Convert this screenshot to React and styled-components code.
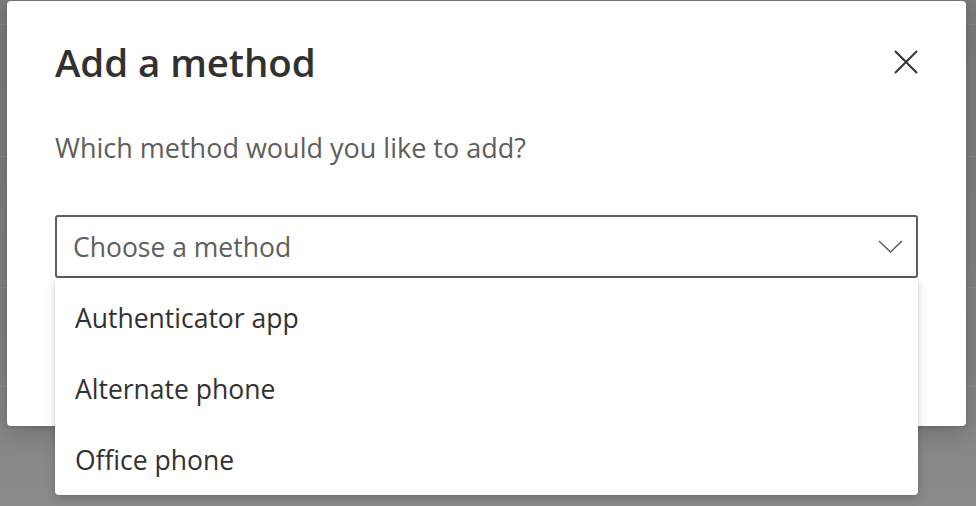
import React from "react";
import styled, { createGlobalStyle } from "styled-components";

const Global = createGlobalStyle`
  html, body { margin: 0; padding: 0; }
  body {
    width: 976px; height: 506px; overflow: hidden;
    font-family: "Open Sans", "Noto Sans", sans-serif;
    background: #858585;
  }
`;

const Page = styled.div`
  position: relative;
  width: 976px;
  height: 506px;
  overflow: hidden;
  background: linear-gradient(180deg, #7b7b7b 0%, #828282 70%, #8a8a8a 100%);
`;

const BackRows = styled.div`
  display: flex;
  flex-direction: column;
`;

const BackRow = styled.div`
  border-bottom: 1px solid rgba(255, 255, 255, 0.08);
`;

const Dialog = styled.div`
  position: absolute;
  left: 7px;
  top: 1px;
  width: 959px;
  height: 425px;
  box-sizing: border-box;
  background: #ffffff;
  border-radius: 4px;
  box-shadow: 0 6px 24px rgba(0, 0, 0, 0.18), 0 1px 4px rgba(0, 0, 0, 0.12);
  padding: 35px 48px 0 48px;
`;

const Header = styled.div`
  display: flex;
  align-items: flex-start;
  justify-content: space-between;
`;

const Title = styled.h1`
  margin: 0;
  font-size: 38.5px;
  line-height: 52px;
  font-weight: 600;
  color: #323130;
  letter-spacing: -0.1px;
`;

const CloseButton = styled.button`
  border: 0;
  background: transparent;
  padding: 0;
  margin-top: 14px;
  width: 24px;
  height: 24px;
  display: flex;
  align-items: center;
  justify-content: center;
  cursor: pointer;
`;

const Prompt = styled.p`
  margin: 40px 0 0 0;
  font-size: 27px;
  line-height: 40px;
  color: #605e5c;
`;

const SelectWrap = styled.div`
  position: relative;
  margin-top: 47px;
`;

const SelectBox = styled.div`
  height: 63px;
  box-sizing: border-box;
  border: 2px solid #605e5c;
  border-radius: 3px;
  display: flex;
  align-items: center;
  justify-content: space-between;
  padding: 0 13px 0 16px;
  font-size: 26.5px;
  color: #605e5c;
`;

const Menu = styled.ul`
  position: absolute;
  left: 0;
  right: 0;
  top: 63px;
  margin: 0;
  list-style: none;
  background: #ffffff;
  border-radius: 0 0 4px 4px;
  box-shadow: 0 4px 10px rgba(0, 0, 0, 0.16), 0 0 3px rgba(0, 0, 0, 0.1);
  display: flex;
  flex-direction: column;
  padding: 4px 0 0 0;
`;

const MenuItem = styled.li`
  height: 71px;
  display: flex;
  align-items: center;
  padding: 0 20px;
  font-size: 26.5px;
  color: #323130;
`;

const rows = [24, 131, 130, 98, 200];
const items = ["Authenticator app", "Alternate phone", "Office phone"];

export default function App() {
  return (
    <>
      <Global />
      <Page>
        <BackRows>
          {rows.map((h, i) => (
            <BackRow key={i} style={{ height: h }} />
          ))}
        </BackRows>
        <Dialog>
          <Header>
            <Title>Add a method</Title>
            <CloseButton aria-label="Close">
              <svg width="24" height="24" viewBox="0 0 24 24">
                <path d="M1 1 L23 23 M23 1 L1 23" stroke="#323130" strokeWidth="2" fill="none" />
              </svg>
            </CloseButton>
          </Header>
          <Prompt>Which method would you like to add?</Prompt>
          <SelectWrap>
            <SelectBox>
              <span>Choose a method</span>
              <svg width="25" height="13" viewBox="0 0 25 13">
                <path d="M1 1 L12.5 12 L24 1" stroke="#605e5c" strokeWidth="1.5" fill="none" />
              </svg>
            </SelectBox>
            <Menu>
              {items.map((t) => (
                <MenuItem key={t}>{t}</MenuItem>
              ))}
            </Menu>
          </SelectWrap>
        </Dialog>
      </Page>
    </>
  );
}
